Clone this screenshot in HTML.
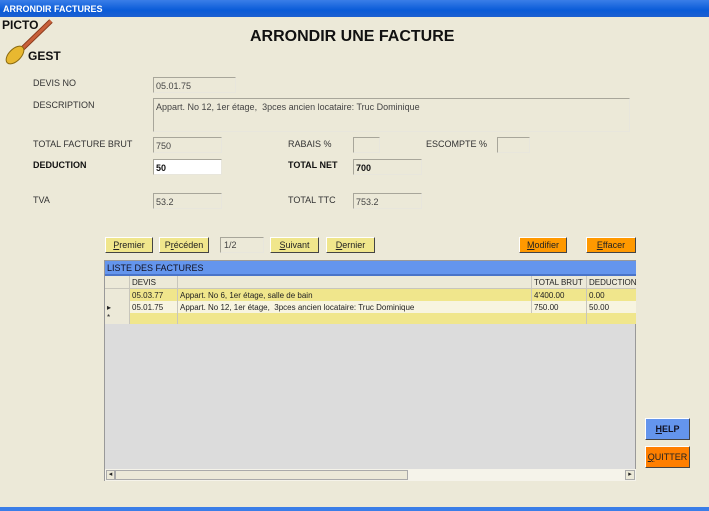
<!DOCTYPE html>
<html><head><style>
*{margin:0;padding:0;box-sizing:border-box}
body{width:709px;height:511px;background:#ECE9D8;position:relative;overflow:hidden;font-family:"Liberation Sans",sans-serif;font-size:9px;color:#222}
.a{position:absolute}
.tb{left:0;top:0;width:709px;height:17px;background:linear-gradient(#3a7ee8,#0a5bd8 60%,#1c5fd0);color:#fff;font-weight:bold;font-size:9px;padding:4px 0 0 3px}
.l{position:absolute;font-size:9px;color:#333}
.b{font-weight:bold;color:#111}
.box{position:absolute;border:1px solid #a8a69a;border-right-color:#e8e6dc;border-bottom-color:#e8e6dc;background:#ECE9D8;font-size:9px;padding:3px 2px;color:#444}
.btn{position:absolute;height:16px;border:1px solid #fff;border-right-color:#444;border-bottom-color:#444;font-size:9px;text-align:center;line-height:14px;color:#222}
.y{background:#f0e68c}.o{background:#ff9900}
.c{position:absolute;height:12px;font-size:8px;padding:2px 2px;border-right:1px solid #c8c6bc;white-space:nowrap;overflow:hidden}
</style></head><body>
<div class="a tb">ARRONDIR FACTURES</div>
<svg class="a" style="left:0;top:17px" width="60" height="50"><line x1="51" y1="4" x2="22" y2="32" stroke="#8a3a1a" stroke-width="5"/><line x1="51" y1="4" x2="22" y2="32" stroke="#c8603a" stroke-width="3"/><ellipse cx="15" cy="38" rx="6" ry="11" transform="rotate(45 15 38)" fill="#e8b830" stroke="#8a6a10"/></svg>
<div class="a" style="left:2px;top:18px;font-weight:bold;font-size:12px;color:#111">PICTO</div>
<div class="a" style="left:28px;top:49px;font-weight:bold;font-size:12px;color:#111">GEST</div>
<div class="a" style="left:250px;top:28px;font-size:16px;font-weight:bold;color:#111">ARRONDIR UNE FACTURE</div>

<div class="l" style="left:33px;top:78px">DEVIS NO</div>
<div class="box" style="left:153px;top:77px;width:83px;height:16px">05.01.75</div>
<div class="l" style="left:33px;top:100px">DESCRIPTION</div>
<div class="box" style="left:153px;top:98px;width:477px;height:34px">Appart. No 12, 1er étage,&nbsp; 3pces ancien locataire: Truc Dominique</div>

<div class="l" style="left:33px;top:139px">TOTAL FACTURE BRUT</div>
<div class="box" style="left:153px;top:137px;width:69px;height:16px">750</div>
<div class="l" style="left:288px;top:139px">RABAIS %</div>
<div class="box" style="left:353px;top:137px;width:27px;height:16px"></div>
<div class="l" style="left:426px;top:139px">ESCOMPTE %</div>
<div class="box" style="left:497px;top:137px;width:33px;height:16px"></div>

<div class="l b" style="left:33px;top:160px">DEDUCTION</div>
<div class="box" style="left:153px;top:159px;width:69px;height:16px;background:#fff;font-weight:bold;color:#111">50</div>
<div class="l b" style="left:288px;top:160px">TOTAL NET</div>
<div class="box" style="left:353px;top:159px;width:69px;height:16px;font-weight:bold;color:#111">700</div>

<div class="l" style="left:33px;top:195px">TVA</div>
<div class="box" style="left:153px;top:193px;width:69px;height:16px">53.2</div>
<div class="l" style="left:288px;top:195px">TOTAL TTC</div>
<div class="box" style="left:353px;top:193px;width:69px;height:16px">753.2</div>

<div class="btn y" style="left:105px;top:237px;width:48px"><u>P</u>remier</div>
<div class="btn y" style="left:159px;top:237px;width:50px">P<u>r</u>écéden</div>
<div class="box" style="left:220px;top:237px;width:44px;height:16px;padding:2px 3px">1/2</div>
<div class="btn y" style="left:270px;top:237px;width:49px"><u>S</u>uivant</div>
<div class="btn y" style="left:326px;top:237px;width:49px"><u>D</u>ernier</div>
<div class="btn o" style="left:519px;top:237px;width:48px"><u>M</u>odifier</div>
<div class="btn o" style="left:586px;top:237px;width:50px"><u>E</u>ffacer</div>

<div class="a" style="left:104px;top:260px;width:532px;height:221px;background:#dcdcdc;border:1px solid #999">
 <div class="a" style="left:0;top:0;width:531px;height:15px;background:#6495ed;border-bottom:2px solid #4a74c8;font-size:9px;color:#112;padding:2px 2px">LISTE DES FACTURES</div>
 <div class="a" style="left:0;top:15px;width:531px;height:13px;background:#ECE9D8;border-bottom:1px solid #c8c6bc"></div>
 <div class="c" style="left:0;top:15px;width:25px;height:13px"></div>
 <div class="c" style="left:25px;top:15px;width:48px;height:13px">DEVIS</div>
 <div class="c" style="left:73px;top:15px;width:354px;height:13px"></div>
 <div class="c" style="left:427px;top:15px;width:55px;height:13px">TOTAL BRUT</div>
 <div class="c" style="left:482px;top:15px;width:49px;height:13px;border:0">DEDUCTION</div>
 <div class="a" style="left:0;top:28px;width:531px;height:12px;background:#f0e68c"></div>
 <div class="c" style="left:0;top:28px;width:25px;background:#ECE9D8"></div>
 <div class="c" style="left:25px;top:28px;width:48px">05.03.77</div>
 <div class="c" style="left:73px;top:28px;width:354px">Appart. No 6, 1er étage, salle de bain</div>
 <div class="c" style="left:427px;top:28px;width:55px">4'400.00</div>
 <div class="c" style="left:482px;top:28px;width:49px;border:0">0.00</div>
 <div class="a" style="left:0;top:40px;width:531px;height:12px;background:#f7f4e0"></div>
 <div class="c" style="left:0;top:40px;width:25px;background:#ECE9D8">▸</div>
 <div class="c" style="left:25px;top:40px;width:48px">05.01.75</div>
 <div class="c" style="left:73px;top:40px;width:354px">Appart. No 12, 1er étage,&nbsp; 3pces ancien locataire: Truc Dominique</div>
 <div class="c" style="left:427px;top:40px;width:55px">750.00</div>
 <div class="c" style="left:482px;top:40px;width:49px;border:0">50.00</div>
 <div class="a" style="left:0;top:52px;width:531px;height:11px;background:#f0e68c"></div>
 <div class="c" style="left:0;top:52px;width:25px;height:11px;background:#ECE9D8;padding:0 2px">*</div>
 <div class="c" style="left:25px;top:52px;width:48px;height:11px"></div>
 <div class="c" style="left:427px;top:52px;width:55px;height:11px"></div>
 <div class="a" style="left:0;top:208px;width:531px;height:12px;background:#f5f3ea"></div>
 <div class="a" style="left:1px;top:209px;width:9px;height:10px;background:#ECE9D8;border:1px solid #aaa;font-size:7px;line-height:8px;text-align:center">◂</div>
 <div class="a" style="left:10px;top:209px;width:293px;height:10px;background:#ECE9D8;border:1px solid #aaa"></div>
 <div class="a" style="left:520px;top:209px;width:10px;height:10px;background:#ECE9D8;border:1px solid #aaa;font-size:7px;line-height:8px;text-align:center">▸</div>
</div>

<div class="btn" style="left:645px;top:418px;width:45px;height:22px;line-height:20px;background:#6495ed;font-weight:bold;color:#112"><u>H</u>ELP</div>
<div class="btn" style="left:645px;top:446px;width:45px;height:22px;line-height:20px;background:#ff7f00;color:#222"><u>Q</u>UITTER</div>
<div class="a" style="left:0;top:507px;width:709px;height:4px;background:#3a7ee8"></div>
</body></html>
